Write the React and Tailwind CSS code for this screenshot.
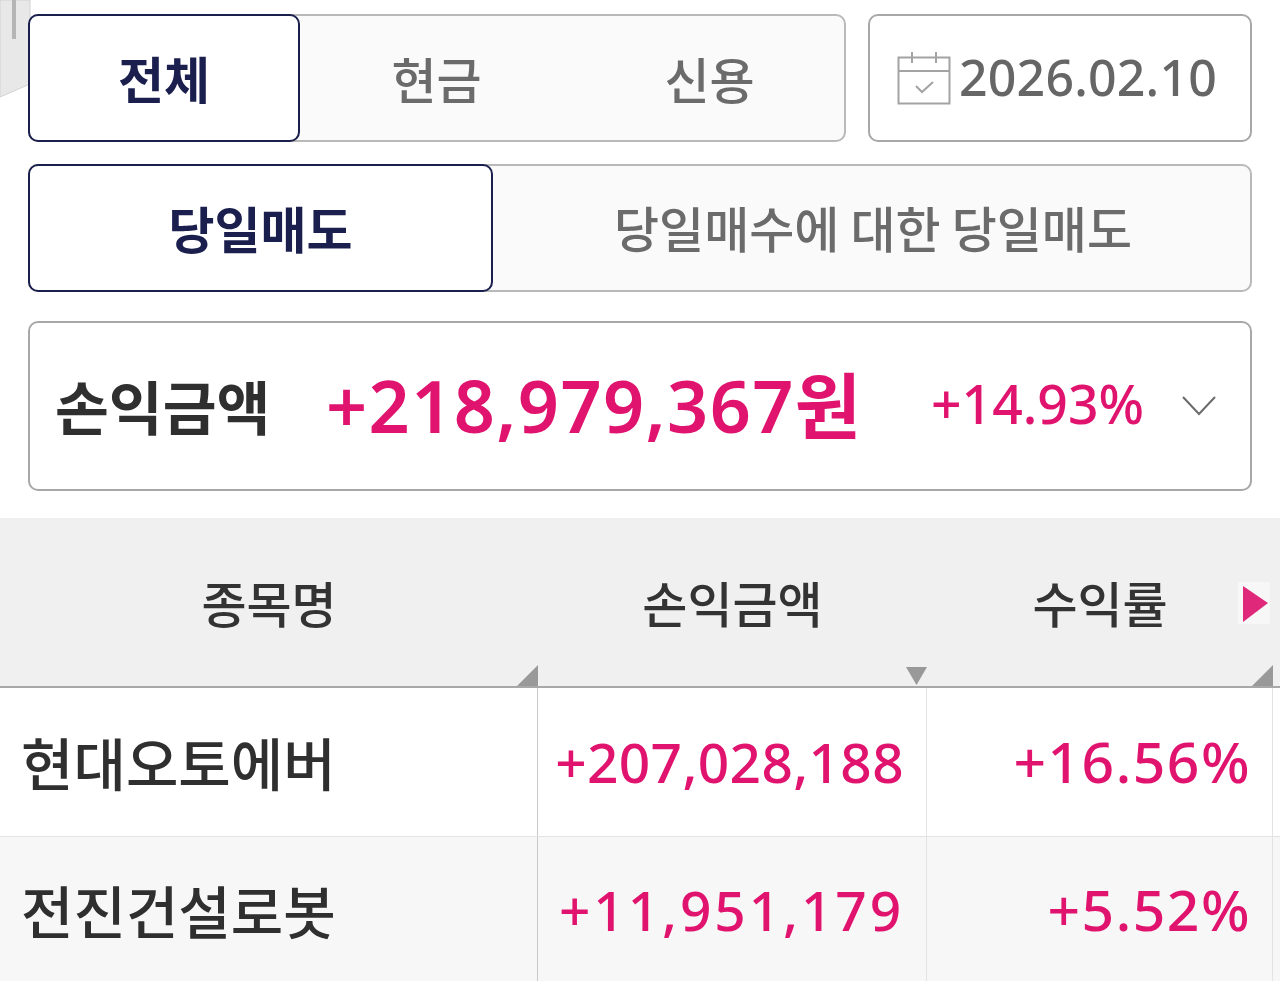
const numFont = "[font-family:'Noto_Sans','Noto_Sans_CJK_KR',sans-serif]";

// one stock row of the table
function StockRow({ name, amount, rate, rowClass, amountClass }) {
  return (
    <div className={`flex items-stretch ${rowClass}`}>
      <div className="w-[538px] border-r border-[#c9c9c9] pl-[21px] pb-[2px] flex items-center text-[57px] font-medium text-[#2f2f2f]">
        {name}
      </div>
      <div className={`w-[389px] border-r border-[#e3e3e3] pr-[22px] pb-[2px] flex items-center justify-end text-[55px] font-medium text-[#e0146e] ${numFont} ${amountClass}`}>
        {amount}
      </div>
      <div className={`w-[346px] border-r border-[#e3e3e3] pr-[21px] pb-[2px] flex items-center justify-end text-[57px] font-medium tracking-[1.500px] text-[#e0146e] ${numFont}`}>
        {rate}
      </div>
    </div>
  );
}

export default function App() {
  return (
    <div className="relative w-[1280px] h-[981px] overflow-hidden bg-white leading-none [font-family:'Noto_Sans_CJK_KR','Noto_Sans',sans-serif]">
      {/* scroll handle in the corner, cut off at a slant */}
      <svg className="absolute left-0 top-0" width="32" height="98" viewBox="0 0 32 98">
        <path d="M0 0H30V84L0 97Z" fill="#e8e8e8" stroke="#d2d2d2" strokeWidth="1" />
        <rect x="12" y="0" width="4" height="39" fill="#b5b5b5" />
      </svg>

      <div className="relative pt-[14px] px-[28px]">
        <div className="flex gap-[22px]">
          <div className="relative flex w-[818px] h-[128px] rounded-[10px] border-2 border-[#b9b9b9] bg-[#fafafa]">
            <div className="-m-[2px] pb-[2px] w-[272px] rounded-[10px] border-2 border-[#1a1f4e] bg-white flex items-center justify-center text-[50px] font-bold text-[#1a1f4e]">
              전체
            </div>
            <div className="w-[273px] pl-[4px] pb-[2px] flex items-center justify-center text-[49px] font-medium text-[#6b6b6b]">현금</div>
            <div className="w-[273px] pl-[4px] pb-[2px] flex items-center justify-center text-[49px] font-medium text-[#6b6b6b]">신용</div>
          </div>
          <div className="flex w-[384px] h-[128px] items-center rounded-[10px] border-2 border-[#a8a8a8] pl-[27px] gap-[8px] text-[50px] font-medium tracking-[0.200px] text-[#666666]">
            <svg width="54" height="54" viewBox="0 0 54 54" fill="none" stroke="#a3a3a3" strokeWidth="2">
              <path d="M1.500 6.500H52.500V52.500H1.500ZM1.500 20H52.500M15 1V12M39 1V12" />
              <path d="M19 35L25 41L36 31" strokeWidth="2" />
            </svg>
            <span className={`${numFont} -mt-[2px]`}>2026.02.10</span>
          </div>
        </div>

        <div className="mt-[22px] flex h-[128px] rounded-[10px] border-2 border-[#b9b9b9] bg-[#fafafa]">
          <div className="-m-[2px] pb-[2px] w-[465px] rounded-[10px] border-2 border-[#1a1f4e] bg-white flex items-center justify-center text-[50px] font-bold text-[#1a1f4e]">
            당일매도
          </div>
          <div className="flex-1 pl-[5px] pb-[3px] flex items-center justify-center text-[49px] font-medium text-[#6b6b6b]">
            당일매수에 대한 당일매도
          </div>
        </div>

        <div className="mt-[29px] flex h-[170px] items-center rounded-[10px] border-2 border-[#a8a8a8] pl-[25px]">
          <span className="w-[271px] pb-[2px] text-[58.500px] font-bold text-[#2f2f2f]">손익금액</span>
          <span className={`w-[605px] pb-[3px] text-[72px] font-semibold tracking-[1.400px] text-[#e0146e] ${numFont}`}>+218,979,367원</span>
          <span className={`w-[250px] pb-[4px] text-[53.500px] font-medium text-[#e0146e] ${numFont}`}>+14.93%</span>
          <svg width="36" height="22" viewBox="0 0 36 22" fill="none" stroke="#6b6b6b" strokeWidth="2">
            <path d="M2 2L18 19L34 2" />
          </svg>
        </div>
      </div>

      <div className="mt-[27px]">
        {/* table header */}
        <div className="relative flex h-[170px] items-center bg-[#f0f0f0] border-b-2 border-[#a8a8a8] text-[49px] font-medium text-[#333333]">
          <div className="w-[538px] pb-[2px] text-center">종목명</div>
          <div className="w-[389px] pb-[2px] text-center">손익금액</div>
          <div className="w-[346px] pb-[2px] text-center">수익률</div>
          <svg className="absolute left-[1238px] top-[64px]" width="32" height="42" viewBox="0 0 32 42">
            <rect width="32" height="42" fill="#f7f7f7" />
            <path d="M5 4L30 21L5 40Z" fill="#e0287a" />
          </svg>
          <svg className="absolute left-[517px] bottom-0" width="21" height="21" viewBox="0 0 21 21">
            <path d="M21 0V21H0Z" fill="#999999" />
          </svg>
          <svg className="absolute left-[906px] bottom-[1px]" width="21" height="18" viewBox="0 0 21 18">
            <path d="M0 0H21L10.500 18Z" fill="#999999" />
          </svg>
          <svg className="absolute left-[1252px] bottom-0" width="21" height="21" viewBox="0 0 21 21">
            <path d="M21 0V21H0Z" fill="#999999" />
          </svg>
        </div>
        <StockRow name="현대오토에버" amount="+207,028,188" rate="+16.56%" amountClass="tracking-[0.350px]" rowClass="h-[149px] bg-white border-b border-[#e3e3e3]" />
        <StockRow name="전진건설로봇" amount="+11,951,179" rate="+5.52%" amountClass="tracking-[2.900px]" rowClass="h-[146px] bg-[#f7f7f7]" />
      </div>
    </div>
  );
}
